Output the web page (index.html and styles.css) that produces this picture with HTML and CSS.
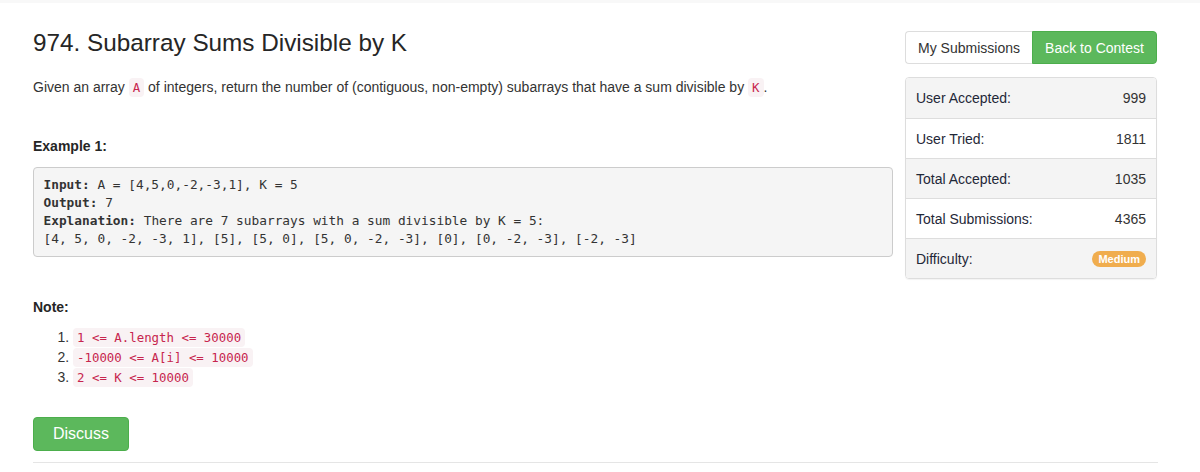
FILE: index.html
```html
<!DOCTYPE html>
<html>
<head>
<meta charset="utf-8">
<link rel="stylesheet" href="styles.css">
</head>
<body>
<div class="top-strip"></div>
<div class="container">
  <div class="layout">
    <main class="main">
      <h1 class="title">974. Subarray Sums Divisible by K</h1>
      <p class="desc">Given an array <code>A</code> of integers, return the number of (contiguous, non-empty) subarrays that have a sum divisible by <code>K</code>.</p>
      <p class="example-title">Example 1:</p>
      <pre class="example"><strong>Input: </strong>A = [4,5,0,-2,-3,1], K = 5
<strong>Output: </strong>7
<strong>Explanation: </strong>There are 7 subarrays with a sum divisible by K = 5:
[4, 5, 0, -2, -3, 1], [5], [5, 0], [5, 0, -2, -3], [0], [0, -2, -3], [-2, -3]</pre>
      <p class="note-title">Note:</p>
      <ol class="notes">
        <li><code>1 &lt;= A.length &lt;= 30000</code></li>
        <li><code>-10000 &lt;= A[i] &lt;= 10000</code></li>
        <li><code>2 &lt;= K &lt;= 10000</code></li>
      </ol>
      <div class="actions"><a class="btn btn-green btn-discuss">Discuss</a></div>
    </main>
    <aside class="side">
      <div class="btn-group">
        <a class="btn btn-white">My Submissions</a>
        <a class="btn btn-green">Back to Contest</a>
      </div>
      <div class="stats">
        <div class="stat-row odd"><span>User Accepted:</span><span>999</span></div>
        <div class="stat-row"><span>User Tried:</span><span>1811</span></div>
        <div class="stat-row odd"><span>Total Accepted:</span><span>1035</span></div>
        <div class="stat-row"><span>Total Submissions:</span><span>4365</span></div>
        <div class="stat-row odd"><span>Difficulty:</span><span class="badge">Medium</span></div>
      </div>
    </aside>
  </div>
  <hr class="divider">
</div>
</body>
</html>
```
FILE: styles.css
```css
* { box-sizing: border-box; }
html, body { margin: 0; padding: 0; background: #fff; }
body {
  font-family: "Liberation Sans", Arial, sans-serif;
  font-size: 14px;
  line-height: 20px;
  color: #333;
}
.top-strip { height: 3px; background: #f8f8f8; }
.container { margin: 0 42px 0 33px; }
.layout { display: flex; gap: 12px; align-items: flex-start; }
.main { width: 860px; padding-top: 27px; }
.side { width: 252px; padding-top: 28px; }

.title {
  margin: 0;
  font-size: 24.3px;
  line-height: 26.4px;
  font-weight: 400;
  color: #262626;
}
.desc { margin: 21px 0 0; color: #333; }
code {
  font-family: "DejaVu Sans Mono", "Liberation Mono", monospace;
  font-size: 12.4px;
  line-height: 1;
  color: #c7254e;
  background: #f9f2f4;
  padding: 2px 4px;
  border-radius: 4px;
}
.example-title, .note-title {
  margin: 39px 0 0;
  font-weight: 700;
  color: #262626;
}
.example {
  margin: 10.5px 0 0;
  padding: 8.5px 9.5px;
  background: #f5f5f5;
  border: 1px solid #ccc;
  border-radius: 4px;
  font-family: "DejaVu Sans Mono", "Liberation Mono", monospace;
  font-size: 12.8px;
  line-height: 17.7px;
  color: #333;
  white-space: pre;
}
.example strong { font-weight: 700; }
.note-title { margin-top: 40px; }
.notes { margin: 10px 0 0; padding-left: 40px; }
.notes li { line-height: 20px; height: 20px; }
.actions { margin-top: 30px; }
.btn {
  display: inline-block;
  font-size: 14px;
  line-height: 20px;
  padding: 6px 12px;
  border: 1px solid transparent;
  text-decoration: none;
  cursor: pointer;
}
.btn-green { background: #5cb85c; border-color: #4cae4c; color: #fff; }
.btn-white { background: #fff; border-color: #ddd; color: #333; }
.btn-discuss {
  font-size: 16px;
  width: 96px;
  height: 34px;
  line-height: 20px;
  padding: 6px 0;
  text-align: center;
  border-radius: 4px;
}
.btn-group { display: flex; height: 33px; }
.btn-group .btn {
  flex: 1 1 auto;
  height: 33px;
  text-align: center;
  padding: 6px 0;
}
.btn-group .btn-white { width: 127px; border-radius: 4px 0 0 4px; border-right: none; }
.btn-group .btn-green { width: 125px; border-radius: 0 4px 4px 0; }

.stats {
  margin-top: 13px;
  border: 1px solid #ddd;
  border-radius: 4px;
  overflow: hidden;
  box-shadow: 0 1px 1px rgba(0,0,0,0.05);
}
.stat-row {
  display: flex;
  justify-content: space-between;
  align-items: center;
  height: 40px;
  padding: 0 10px;
  border-top: 1px solid #ddd;
  color: #1f2838;
}
.stat-row:first-child { border-top: none; }
.stat-row.odd { background: #f4f4f4; }
.stat-row span:last-child { color: #333; }
.badge {
  display: inline-block;
  background: #f0ad4e;
  color: #fff !important;
  font-size: 11px;
  font-weight: 700;
  line-height: 16px;
  height: 16px;
  padding: 0 6px;
  border-radius: 8px;
}
.divider {
  margin: 11px 0 0;
  border: 0;
  border-top: 1px solid #e5e5e5;
}
```
